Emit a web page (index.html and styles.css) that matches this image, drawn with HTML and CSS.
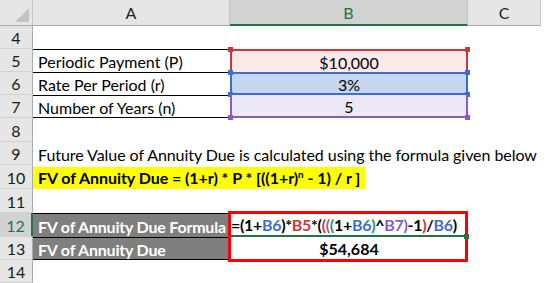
FILE: index.html
```html
<!DOCTYPE html>
<html>
<head>
<meta charset="utf-8">
<link rel="stylesheet" href="styles.css">
</head>
<body>
<div class="sheet">
  <div class="ch corner"><svg class="tri" width="14" height="14" viewBox="0 0 14 14"><polygon points="14,0 14,14 0,14" fill="#c3c3c3"/></svg></div>
  <div class="ch">A</div>
  <div class="ch sel">B</div>
  <div class="ch">C</div>

  <div class="rh">4</div><div class="a"></div><div class="b"></div><div class="c"></div>

  <div class="rh">5</div>
  <div class="a lt">Periodic Payment (P)</div>
  <div class="b ref red"><span class="h tl"></span><span class="h tr"></span>$10,000</div>
  <div class="c"></div>

  <div class="rh">6</div>
  <div class="a lt">Rate Per Period (r)</div>
  <div class="b ref blue"><span class="h tl"></span><span class="h tr"></span><span class="h bl"></span><span class="h br"></span>3%</div>
  <div class="c"></div>

  <div class="rh">7</div>
  <div class="a lt lb">Number of Years (n)</div>
  <div class="b ref purple"><span class="h bl"></span><span class="h br"></span>5</div>
  <div class="c"></div>

  <div class="rh">8</div><div class="a"></div><div class="b"></div><div class="c"></div>

  <div class="rh">9</div>
  <div class="a wide sentence">Future Value of Annuity Due is calculated using the formula given below</div>

  <div class="rh">10</div>
  <div class="a wide"><span class="hl">FV of Annuity Due = (1+r) * P * [((1+r)<sup>n</sup> - 1) / r ]</span></div>

  <div class="rh">11</div><div class="a"></div><div class="b"></div><div class="c"></div>

  <div class="rh rsel">12</div>
  <div class="a dark lt">FV of Annuity Due Formula</div>
  <div class="box">
    <div class="f">=(1+<i class="bl">B6</i>)*<i class="rd">B5</i>*(<i class="rd">(</i><i class="pu">(</i><i class="gr">(</i>1+<i class="bl">B6</i><i class="gr">)</i>^<i class="pu">B7</i><i class="pu">)</i>-1<i class="rd">)</i>/<i class="bl">B6</i>)<span class="gh"></span></div>
    <div class="v">$54,684</div>
  </div>
  <div class="c"></div>

  <div class="rh">13</div>
  <div class="a dark lt lb">FV of Annuity Due</div>
  <div class="c"></div>

  <div class="rh">14</div><div class="a"></div><div class="b"></div><div class="c"></div>
</div>
</body>
</html>
```
FILE: styles.css
```css
html, body { margin: 0; padding: 0; background: #fff; }
body { font-family: Lato, "Liberation Sans", sans-serif; font-size: 16px; color: #000; overflow: hidden; }
.sheet {
  display: grid;
  grid-template-columns: 33px 197px 238px 1fr;
  grid-template-rows: 26px 23px 23px 23px 23px 24px 23px 24px 24px 24px 23px 23px;
  width: 546px;
  height: 283px;
}
.ch {
  background: #e6e6e6;
  border-right: 1px solid #c4c4c4;
  border-bottom: 1px solid #ababab;
  box-sizing: border-box;
  display: flex; align-items: center; justify-content: center;
  color: #222; font-size: 16px;
}
.sheet > .ch:nth-child(4) { width: 73px; }
.corner { justify-content: flex-end; align-items: flex-end; padding: 0 3px 3px 0; }
.tri { display: block; }
.ch.sel { background: #d2d2d2; color: #217346; border-bottom: 2px solid #217346; }
.rh {
  background: #e6e6e6;
  border-right: 1px solid #ababab;
  border-bottom: 1px solid #cfcfcf;
  box-sizing: border-box;
  display: flex; align-items: center; justify-content: center;
  color: #1a1a1a; padding-top: 1px;
}
.rh.rsel { background: #d2d2d2; color: #217346; border-right: 2px solid #217346; }
.a, .b { box-sizing: border-box; display: flex; align-items: center; padding-top: 1px; white-space: nowrap; }
.a { padding-left: 5px; }
.a.wide { grid-column: 2 / 5; padding-left: 0; }
.sentence { padding-left: 5px !important; letter-spacing: -0.06px; }
.lt { border-top: 1px solid #000; }
.lb { border-bottom: 1px solid #000; }
.b { justify-content: center; position: relative; }
.ref { border-left: 2px solid; border-right: 2px solid; }
.red { background: #fbe9e9; border-color: #c8373e; border-top: 2px solid #c8373e; }
.blue { background: #c5d6ee; border-color: #3a6fcd; border-top: 2px solid #3a6fcd; border-bottom: 2px solid #3a6fcd; }
.purple { background: #ede8f6; border-color: #8a5cc0; border-bottom: 2px solid #8a5cc0; }
.h { position: absolute; width: 5px; height: 5px; }
.red .h { background: #c8373e; }
.blue .h { background: #3a6fcd; }
.purple .h { background: #8a5cc0; }
.h.tl { left: -4px; top: -4px; }
.h.tr { right: -4px; top: -4px; }
.h.bl { left: -4px; bottom: -4px; }
.h.br { right: -4px; bottom: -4px; }
.hl { background: #ffff00; font-weight: 700; padding: 0 5px; line-height: 22px; letter-spacing: -0.05px; }
.hl sup { font-size: 10px; line-height: 0; vertical-align: 6px; }
.dark { background: #7f7f7f; color: #fff; font-weight: 700; letter-spacing: -0.2px; }
.box { grid-column: 3; grid-row: span 2; position: relative; display: grid; grid-template-rows: 24px 23px; font-weight: 700; }
.box::after { content: ""; position: absolute; left: -2px; top: -2px; right: 0; bottom: -2px; border: 3px solid #ff0000; }
.f { position: relative; display: flex; align-items: center; padding-left: 1px; border-bottom: 2px solid #217346; white-space: nowrap; letter-spacing: -0.3px; }
.f i { font-style: normal; }
.f .bl { color: #3a6fcd; }
.f .rd { color: #c8373e; }
.f .pu { color: #8a5cc0; }
.f .gr { color: #1d9a4e; }
.gh { position: absolute; right: -1px; bottom: -4px; width: 5px; height: 5px; background: #217346; z-index: 2; }
.v { display: flex; align-items: center; justify-content: center; border-bottom: 1px solid #000; }
.dark.lb { border-bottom: 1px solid #000; }
```
